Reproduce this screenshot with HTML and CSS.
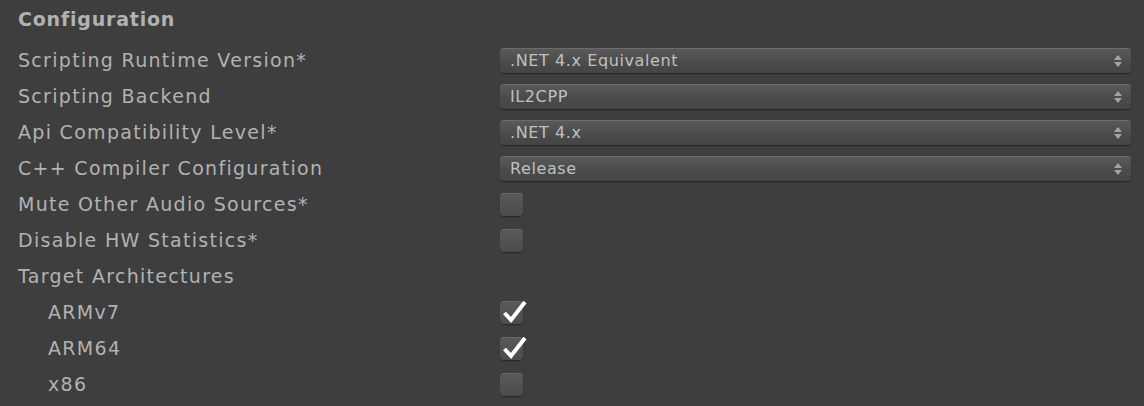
FILE: index.html
```html
<!DOCTYPE html>
<html lang="en">
<head>
    <meta charset="UTF-8">
    <title>Player Settings - Configuration</title>
    <link rel="stylesheet" href="styles.css">
</head>
<body>
    <div class="section-title">Configuration</div>

    <div class="row">
        <div class="label">Scripting Runtime Version*</div>
        <div class="control"><div class="popup">.NET 4.x Equivalent<span class="arrows"></span></div></div>
    </div>
    <div class="row">
        <div class="label">Scripting Backend</div>
        <div class="control"><div class="popup">IL2CPP<span class="arrows"></span></div></div>
    </div>
    <div class="row">
        <div class="label">Api Compatibility Level*</div>
        <div class="control"><div class="popup">.NET 4.x<span class="arrows"></span></div></div>
    </div>
    <div class="row">
        <div class="label">C++ Compiler Configuration</div>
        <div class="control"><div class="popup">Release<span class="arrows"></span></div></div>
    </div>
    <div class="row">
        <div class="label">Mute Other Audio Sources*</div>
        <div class="control"><span class="toggle"></span></div>
    </div>
    <div class="row">
        <div class="label">Disable HW Statistics*</div>
        <div class="control"><span class="toggle"></span></div>
    </div>
    <div class="row">
        <div class="label">Target Architectures</div>
        <div class="control"></div>
    </div>
    <div class="row sub">
        <div class="label">ARMv7</div>
        <div class="control"><span class="toggle on"><svg viewBox="0 0 23 23" class="tick"><path d="M4.5 11 L11 18 L25 0"/></svg></span></div>
    </div>
    <div class="row sub">
        <div class="label">ARM64</div>
        <div class="control"><span class="toggle on"><svg viewBox="0 0 23 23" class="tick"><path d="M4.5 11 L11 18 L25 0"/></svg></span></div>
    </div>
    <div class="row sub">
        <div class="label">x86</div>
        <div class="control"><span class="toggle"></span></div>
    </div>
</body>
</html>
```

FILE: styles.css
```css
body {
    margin: 0;
    padding: 0 13px 0 18px;
    background: #3e3e3e;
    color: #b2b2b2;
    font-family: "DejaVu Sans", "Open Sans", sans-serif;
    font-size: 19px;
    letter-spacing: 1.3px;
    overflow: hidden;
}
.section-title {
    height: 38px;
    line-height: 38px;
    font-weight: bold;
    letter-spacing: 0.8px;
    margin-bottom: 4px;
}
.row {
    display: flex;
    align-items: center;
    height: 36px;
}
.label {
    width: 482px;
    flex: none;
    white-space: nowrap;
}
.row.sub .label {
    padding-left: 30px;
    width: 452px;
}
.control {
    flex: 1;
    display: flex;
    align-items: center;
}
.popup {
    flex: 1;
    position: relative;
    height: 24px;
    line-height: 24px;
    padding-left: 10px;
    font-size: 16px;
    letter-spacing: 0.6px;
    color: #c0c0c0;
    border-radius: 4px;
    border-top: 1px solid #6c6c6c;
    background: linear-gradient(#595959, #4a4a4a 60%, #454545);
    box-shadow: 0 1px 1px #262626;
}
.arrows {
    position: absolute;
    right: 13px;
    top: 6px;
    width: 0;
    height: 12px;
}
.arrows::before,
.arrows::after {
    content: "";
    position: absolute;
    left: -4px;
    border-left: 4px solid transparent;
    border-right: 4px solid transparent;
}
.arrows::before {
    top: 0;
    border-bottom: 5px solid #a4a4a4;
}
.arrows::after {
    bottom: 0;
    border-top: 5px solid #a4a4a4;
}
.toggle {
    position: relative;
    width: 23px;
    height: 22px;
    border-radius: 4px;
    border-top: 1px solid #6a6a6a;
    background: linear-gradient(#595959, #4c4c4c);
    box-shadow: 0 1px 1px #262626;
}
.tick {
    position: absolute;
    left: 0;
    top: 0;
    width: 23px;
    height: 23px;
    overflow: visible;
    fill: none;
    stroke: #ffffff;
    stroke-width: 4;
}
```
